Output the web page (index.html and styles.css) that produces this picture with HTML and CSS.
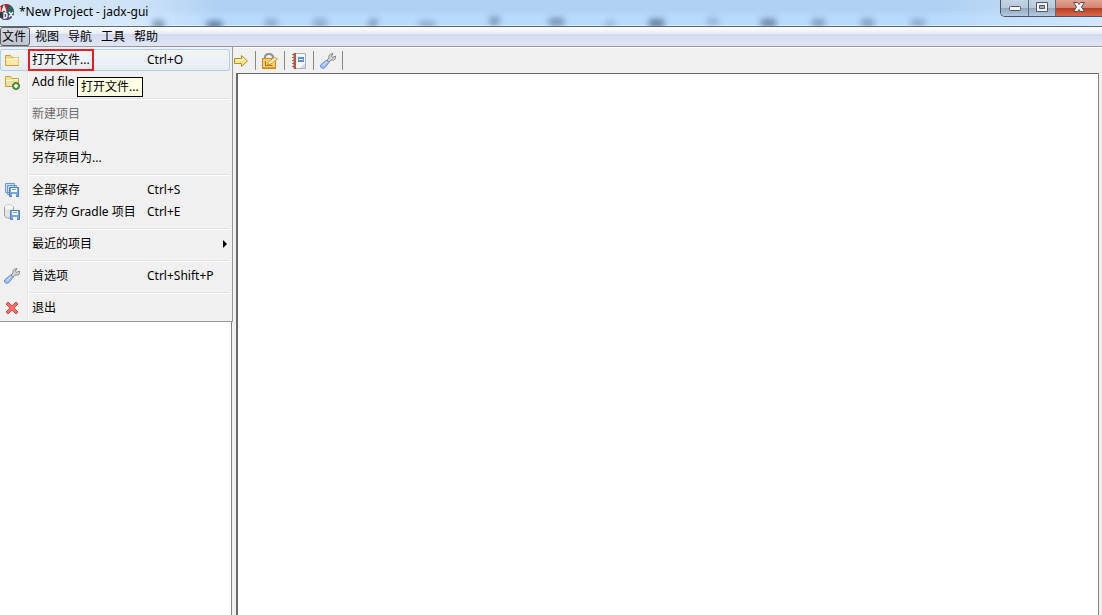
FILE: index.html
```html
<!DOCTYPE html>
<html lang="zh-CN">
<head>
    <meta charset="UTF-8">
    <meta name="viewport" content="width=device-width, initial-scale=1.0">
    <title>*New Project - jadx-gui</title>
    <link rel="stylesheet" href="styles.css">
</head>
<body>

<div class="window">
    <!-- Title bar -->
    <header class="titlebar">
        <svg class="glass" width="1000" height="32" aria-hidden="true">
            <g fill="#46607f">
                <rect x="153" y="20" width="11" height="9" opacity=".6"/>
                <rect x="207" y="21" width="15" height="8" opacity=".8"/>
                <rect x="265" y="19" width="13" height="8" opacity=".4"/>
                <rect x="313" y="19" width="14" height="8" opacity=".4"/>
                <path d="M366 27l6-8h6l-2 8z" opacity=".6"/>
                <rect x="419" y="21" width="16" height="7" opacity=".4"/>
                <path d="M489 17h11v4l-5 5h-4z" opacity=".6"/>
                <rect x="549" y="18" width="15" height="8" opacity=".6"/>
                <path d="M602 27l5-4 7-4v8z" opacity=".4"/>
                <rect x="649" y="19" width="15" height="9" opacity=".75"/>
                <rect x="707" y="18" width="12" height="7" opacity=".35"/>
                <rect x="761" y="19" width="15" height="8" opacity=".7"/>
                <rect x="812" y="19" width="13" height="8" opacity=".5"/>
                <rect x="861" y="19" width="13" height="8" opacity=".5"/>
                <rect x="911" y="19" width="14" height="8" opacity=".4"/>
            </g>
        </svg>
        <svg class="app-icon" width="15" height="16" viewBox="0 0 15 16" aria-hidden="true">
            <circle cx="6" cy="8" r="8" fill="#303a40"/>
            <path d="M6 8L-2 8A8 8 0 0 1 9 1z" fill="#c8202c"/>
            <path d="M6 8L9 1A8 8 0 0 1 13 12z" fill="#27655f"/>
            <path d="M6 8L12 13A8 8 0 0 1 2 15z" fill="#5b4aa5"/>
            <path d="M0 3v3q0 2-1 2M2 8l2-6 2 6M3 6h2M4 9v5h1q2 0 2-2.500T5 9zM9 8l4 5M13 8l-4 5" fill="none" stroke="#fff" stroke-width="1.300"/>
        </svg>
        <h1 class="title">*New Project - jadx-gui</h1>
        <div class="window-buttons">
            <button class="win-btn" aria-label="最小化">
                <svg width="14" height="8" viewBox="0 0 14 8"><rect x="1.500" y="3.500" width="11" height="4" rx="1" fill="#f8f8f8" stroke="#4c5666"/></svg>
            </button>
            <button class="win-btn win-max" aria-label="最大化">
                <svg width="12" height="10" viewBox="0 0 12 10"><path d="M.5.500h11v9H.5z" fill="#f8f8f8" stroke="#4c5666"/><path d="M3.500 3.500h5v3h-5z" fill="#9fb0c4" stroke="#4c5666"/></svg>
            </button>
            <button class="win-btn win-close" aria-label="关闭">
                <svg width="12" height="10" viewBox="0 0 12 10"><path d="M.5.500h4L6 2.500 7.500.500h4L8.500 5l3 4.500h-4L6 7.500l-1.500 2h-4L3.500 5z" fill="#f8f8f8" stroke="#5a4a52"/></svg>
            </button>
        </div>
    </header>

    <!-- Menu bar -->
    <nav class="menubar">
        <button class="menu-title active">文件</button>
        <button class="menu-title">视图</button>
        <button class="menu-title">导航</button>
        <button class="menu-title">工具</button>
        <button class="menu-title">帮助</button>
    </nav>

    <!-- Toolbar -->
    <div class="toolbar">
        <button class="tool" aria-label="前进">
            <svg width="16" height="16" viewBox="0 0 16 16"><path d="M1.500 5.500H8.500V2.500L14.500 8 8.500 13.500V10.500H1.500z" fill="#fbe48a" stroke="#b98a1c"/><path d="M3 7h7V5l3 3" fill="none" stroke="#fff8cf"/></svg>
        </button>
        <span class="divider"></span>
        <button class="tool" aria-label="反混淆">
            <svg width="16" height="16" viewBox="0 0 16 16"><path d="M3 7V4.500Q3 1 7 1t4 3.500V7" fill="none" stroke="#8e8e8e" stroke-width="2"/><rect x=".5" y="5.500" width="13" height="10" fill="#fbd26e" stroke="#d0861c"/><path d="M1 14.500h12" stroke="#e79a27"/><path d="M3.500 8v4.500h7" fill="none" stroke="#b0711c"/><path d="M5.500 12l1-3 6-5 3 2-6.500 5z" fill="#fdeeb5" stroke="#d39436"/></svg>
        </button>
        <span class="divider"></span>
        <button class="tool" aria-label="日志">
            <svg width="16" height="16" viewBox="0 0 16 16"><path d="M2.500.500h12v15h-12z" fill="#f4f7fa" stroke="#a9b1b8"/><path d="M3 0h2v16H3z" fill="#c5532d"/><path d="M1 1.500h3M1 4.500h3M1 7.500h3M1 10.500h3M1 13.500h3" stroke="#a5654c"/><path d="M7 4h6v5H7z" fill="#5b8fdc"/><path d="M8 6.500h4" stroke="#fff"/><path d="M9 15l5-5v5z" fill="#d6dce2"/></svg>
        </button>
        <span class="divider"></span>
        <button class="tool" aria-label="首选项">
            <svg width="16" height="16" viewBox="0 0 16 16"><path d="M7 7L9 5Q8 1 13 .5L11.500 3l1 1.500L15.500 3Q16 8 11 7L9 9z" fill="#d2d2d2" stroke="#8a8a8a"/><path d="M6.500 7L9 9.500 4.500 15Q2.500 16 1 14.500T1 11.500z" fill="#9dbef5" stroke="#6f93d6"/><path d="M3 12.500l4-4" stroke="#c8dcfb" stroke-width="1.500"/></svg>
        </button>
        <span class="divider"></span>
    </div>

    <!-- Tree on the left, editor on the right -->
    <main class="panes">
        <section class="tree-pane"></section>
        <section class="editor-pane"></section>
    </main>

    <!-- File menu -->
    <div class="popup" role="menu">
        <button class="item selected" role="menuitem">
            <svg class="icon" width="16" height="16" viewBox="0 0 16 16"><path d="M1.500 13.500v-10h5l1.500 2h6.500v8z" fill="#f3d47d" stroke="#c9a03e"/><path d="M2.500 6.500h6l1-1h5v7.500h-12z" fill="#fbe8a6"/><path d="M2 7.500h7l1-1h4" stroke="#fffbe2" fill="none"/></svg>
            <span class="label marked">打开文件...</span>
            <span class="keys">Ctrl+O</span>
        </button>
        <button class="item" role="menuitem">
            <svg class="icon" width="16" height="16" viewBox="0 0 16 16"><path d="M1.500 12.500v-10h5l1.500 2h6.500v8z" fill="#f8e09a" stroke="#c9a03e"/><path d="M2 6.500h7l1-1h4" stroke="#fffbe2" fill="none"/><circle cx="12" cy="12" r="3.500" fill="#5d9c45" stroke="#3d7a2f"/><path d="M10 12h4M12 10v4" stroke="#fff" stroke-width="1.500"/></svg>
            <span class="label">Add file</span>
        </button>
        <hr class="separator">
        <button class="item" role="menuitem" disabled><span class="label">新建项目</span></button>
        <button class="item" role="menuitem"><span class="label">保存项目</span></button>
        <button class="item" role="menuitem"><span class="label">另存项目为...</span></button>
        <hr class="separator">
        <button class="item" role="menuitem">
            <svg class="icon" width="16" height="16" viewBox="0 0 16 16"><g fill="#c9def6" stroke="#6f97d0"><path d="M1.500 1.500h9v9h-9zM3.500 3.500h9v9h-9z"/><path d="M5.500 5.500h9v9h-9z" fill="#79a6e3" stroke="#527fc0"/></g><path d="M7 6h6v4H7zM8 12h4v3H8z" fill="#f5faff"/><path d="M8 7.500h4" stroke="#73b763"/></svg>
            <span class="label">全部保存</span>
            <span class="keys">Ctrl+S</span>
        </button>
        <button class="item" role="menuitem">
            <svg class="icon" width="16" height="16" viewBox="0 0 16 16"><path d="M.5 3v9q2 3 9 2V3q-1-2-4.500-2T.5 3z" fill="#e4e4e4" stroke="#a0a0a0"/><ellipse cx="5" cy="3" rx="4" ry="2" fill="#fafafa"/><path d="M6.500 6.500h9v9h-9z" fill="#79a6e3" stroke="#527fc0"/><path d="M8 7h6v4H8zM9 13h4v3H9z" fill="#f5faff"/><path d="M9 8.500h4" stroke="#73b763"/></svg>
            <span class="label">另存为 Gradle 项目</span>
            <span class="keys">Ctrl+E</span>
        </button>
        <hr class="separator">
        <button class="item" role="menuitem">
            <span class="label">最近的项目</span>
            <svg class="arrow" width="4" height="8" viewBox="0 0 4 8"><path d="M0 0l4 4-4 4z"/></svg>
        </button>
        <hr class="separator">
        <button class="item" role="menuitem">
            <svg class="icon" width="16" height="16" viewBox="0 0 16 16"><path d="M7 7L9 5Q8 1 13 .5L11.500 3l1 1.500L15.500 3Q16 8 11 7L9 9z" fill="#d2d2d2" stroke="#8a8a8a"/><path d="M6.500 7L9 9.500 4.500 15Q2.500 16 1 14.500T1 11.500z" fill="#9dbef5" stroke="#6f93d6"/><path d="M3 12.500l4-4" stroke="#c8dcfb" stroke-width="1.500"/></svg>
            <span class="label">首选项</span>
            <span class="keys">Ctrl+Shift+P</span>
        </button>
        <hr class="separator">
        <button class="item" role="menuitem">
            <svg class="icon" width="16" height="16" viewBox="0 0 16 16"><path d="M2 4l2-2 4 4 4-4 2 2-4 4 4 4-2 2-4-4-4 4-2-2 4-4z" fill="#f9716a" stroke="#e84a46"/></svg>
            <span class="label">退出</span>
        </button>
    </div>
    <div class="tooltip" role="tooltip">打开文件...</div>
</div>

</body>
</html>
```
FILE: styles.css
```css
* { box-sizing: border-box; }
body { margin: 0; background: #f0f0f0; color: #000; font: 12px/16px "Noto Sans", "Noto Sans CJK SC", sans-serif; }
button { margin: 0; padding: 0; border: 0; background: none; color: inherit; font: inherit; }
svg { display: block; flex: none; }

.window { position: relative; display: flex; flex-direction: column; height: 100vh; overflow: hidden; }

/* title bar */
.titlebar { position: relative; display: flex; flex: none; align-items: flex-start; height: 27px; overflow: hidden; border-bottom: 1px solid #56657a; box-shadow: inset 0 -1px #deeeff; background: linear-gradient(90deg, rgba(255,255,255,.5), rgba(255,255,255,.4) 12%, rgba(255,255,255,0) 20%, rgba(255,255,255,0) 85%, rgba(225,240,250,.6)), linear-gradient(#aed0f2, #b0d1f3 40%, #b8dafe 65%, #b8dafe); }
.glass { position: absolute; left: 0; top: 0; filter: blur(3px); }
.app-icon { position: relative; margin-top: 4px; }
.title { position: relative; flex: 1; margin: 4px 0 0 4px; font-size: 12px; line-height: 16px; font-weight: normal; }
.window-buttons { position: relative; display: flex; height: 17px; overflow: hidden; border: 1px solid #48566a; border-top: 0; border-right: 0; border-radius: 0 0 0 5px; }
.win-btn { display: flex; align-items: center; justify-content: center; width: 28px; padding-bottom: 2px; border-right: 1px solid #5b6b80; background: linear-gradient(#c5d4e4, #b9c9da 48%, #93a8bf 50%, #b4cadf); }
.win-max { width: 27px; }
.win-close { width: 46px; border-right: 0; background: linear-gradient(#e0a294, #d58472 48%, #b83c22 50%, #d66a4a); }

/* menu bar */
.menubar { display: flex; flex: none; gap: 3px; height: 20px; border-bottom: 1px solid #999; background: linear-gradient(#fff, #e6ebf5 7px, #d4daed 7px, #e1e6f6); }
.menu-title { width: 30px; height: 19px; padding: 0 1px; border: 1px solid transparent; text-align: left; white-space: nowrap; }
.active { border-color: #5c5f68; border-radius: 3px; background: linear-gradient(#d6d9e0, #bfc4d2); }

/* toolbar */
.toolbar { display: flex; flex: none; align-items: center; gap: 6px; height: 26px; padding-left: 233px; border-top: 1px solid #fff; }
.divider { width: 1px; height: 19px; background: #888; }

/* panes */
.panes { display: flex; flex: 1; gap: 4px; padding-right: 3px; }
.tree-pane { width: 232px; border-right: 1px solid #828790; background: #fff; }
.editor-pane { flex: 1; border: 1px solid #828790; border-top-color: #696969; border-left: 2px solid #696969; border-bottom: 0; background: #fff; }

/* popup menu */
.popup { position: absolute; left: 0; top: 47px; display: flex; flex-direction: column; width: 233px; padding: 2px 2px 2px 0; border: 1px solid #999; border-top: 0; border-left: 0; background: linear-gradient(90deg, #e2e3e3 1px, #fff 1px, #fff 2px, transparent 2px) 27px 0 no-repeat #f0f0f0; }
.item { display: grid; grid-template-columns: 24px 111px 1fr 7px; column-gap: 4px; align-items: center; height: 22px; padding-left: 4px; border-radius: 3px; text-align: left; }
.selected { background: linear-gradient(#f3f5f8, #e6ecf4); box-shadow: inset 0 0 0 1px #aecff7; }
.item:disabled { color: #6d6d6d; }
.label { grid-column: 2; white-space: nowrap; }
.keys { grid-column: 3; white-space: nowrap; }
.arrow { grid-column: 4; }
.marked { justify-self: start; margin-left: -2px; padding: 1px 2px; outline: 2px solid #ed1c24; }
.separator { width: 201px; height: 2px; margin: 5px 0 3px 29px; border: 0; border-top: 1px solid #e0e0e0; background: #fff; }
.tooltip { position: absolute; left: 77px; top: 77px; padding: 1px 3px; border: 1px solid #000; background: #ffffe1; }
```
